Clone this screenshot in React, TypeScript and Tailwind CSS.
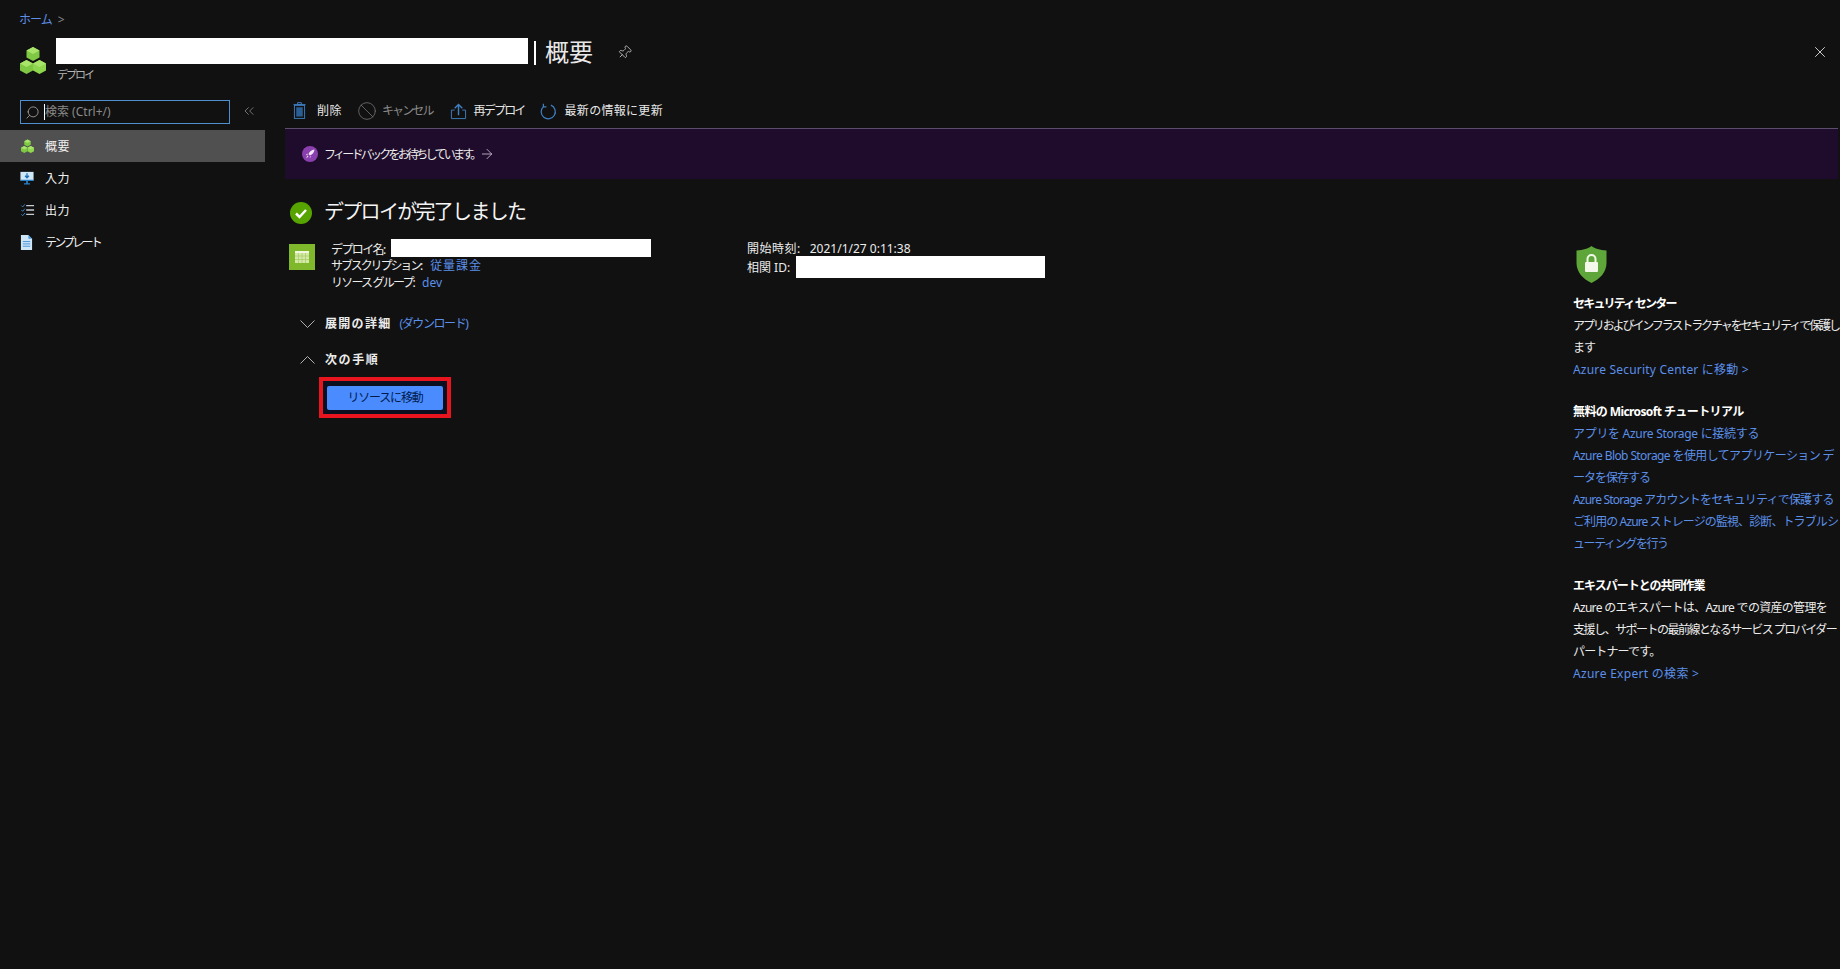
import { Pin, X, Search, ChevronsLeft, Ban, ArrowRight } from "lucide-react";

function CubeIcon({ className }: { className: string }) {
  return (
    <svg viewBox="0 0 28 30" className={className}>
      <path d="M14 1l6.500 3.500v7L14 15l-6.500-3.500v-7z" fill="#7fc843" />
      <path d="M7.500 14L14 17.500v7L7.500 28 1 24.500v-7z" fill="#7fc843" />
      <path d="M20.500 14L27 17.500v7L20.500 28 14 24.500v-7z" fill="#8fd64f" />
      <path d="M14 1l6.500 3.500L14 8 7.500 4.500zM7.500 14l6.500 3.500-6.500 3.500L1 17.500zM20.500 14l6.500 3.500-6.500 3.500-6.500-3.500z" fill="#a8e46a" />
    </svg>
  );
}

function InputIcon() {
  return (
    <svg viewBox="0 0 16 16" className="w-[14px] h-[14px]">
      <rect x="0.500" y="1" width="15" height="10" fill="#cfe8f7" />
      <path d="M8 2.500v5M5.800 5.500L8 7.800l2.200-2.300" stroke="#1f6fb5" strokeWidth="1.500" fill="none" />
      <path d="M0.500 10h15v1.500h-15zM7 11.500h2v2.500H7zM4.500 14h7v1.500h-7z" fill="#2a7fc4" />
    </svg>
  );
}

function OutputIcon() {
  return (
    <svg viewBox="0 0 16 16" className="w-[15px] h-[14px]" fill="none">
      <path d="M1 3l1.500 1.500L5 1.500M1 8l1.500 1.500L5 6.500M1 13l1.500 1.500L5 11.500" stroke="#3f8fd6" strokeWidth="1" />
      <path d="M6.500 3h9M6.500 8h9M6.500 13h9" stroke="#c9ccd0" strokeWidth="1.500" />
    </svg>
  );
}

function TemplateIcon() {
  return (
    <svg viewBox="0 0 14 16" className="w-[13px] h-[15px]">
      <path d="M1 0h8l4 4v12H1z" fill="#cfe6f7" />
      <path d="M9 0l4 4H9z" fill="#4a9bdc" />
      <path d="M3 7h8M3 9.500h8M3 12h8" stroke="#3f8fd6" strokeWidth="1" />
    </svg>
  );
}

function TrashIcon() {
  return (
    <svg viewBox="0 0 14 18" className="w-[13px] h-[17px] mb-[2px]" fill="none">
      <path d="M5 0.500h4v2H5z" stroke="#3f7fc0" />
      <path d="M0.500 2.500h13" stroke="#3f7fc0" />
      <rect x="1.500" y="3.500" width="11" height="14" stroke="#3f7fc0" />
      <rect x="3.500" y="5.500" width="7" height="10" fill="#2a5f95" />
    </svg>
  );
}

function UploadIcon() {
  return (
    <svg viewBox="0 0 18 18" className="w-[17px] h-[17px]" fill="none" stroke="#3f7fc0">
      <path d="M5 7.500H1.500v9h15v-9H13" />
      <path d="M9 13V1.500M5 5.500l4-4 4 4" strokeWidth="1.500" />
    </svg>
  );
}

function RefreshIcon() {
  return (
    <svg viewBox="0 0 18 18" className="w-[17px] h-[17px]" fill="none" stroke="#3f7fc0" strokeWidth="1.300">
      <path d="M11.500 2.300A7.500 7.500 0 1 1 3.600 3.800" />
      <path d="M3.600 0.800v3.200h3.200" />
    </svg>
  );
}

function RocketIcon() {
  return (
    <svg viewBox="0 0 16 16" className="w-4 h-4">
      <circle cx="8" cy="8" r="8" fill="#8a3fae" />
      <path d="M12.500 3.500c-3 .3-5 2-6 4.500l1.500 1.500c2.500-1 4.200-3 4.500-6zM6 7.500L4 8.500l1 1zM8.500 10l-1 2 1.500-1zM5.500 9.500l1 1-2.500 2z" fill="#f2e6f7" />
    </svg>
  );
}

function CheckCircle() {
  return (
    <svg viewBox="0 0 22 22" className="w-[22px] h-[22px] mt-[2px]">
      <circle cx="11" cy="11" r="11" fill="#57a300" />
      <path d="M6 11.500l3.500 3.500L16 8" stroke="#fff" strokeWidth="2.500" fill="none" />
    </svg>
  );
}

function Chevron({ up }: { up: boolean }) {
  return (
    <svg viewBox="0 0 15 8" className="w-[15px] h-[8px]" fill="none" stroke="#b0b0b0">
      <path d={up ? "M0.500 7.500l7-7 7 7" : "M0.500 0.500l7 7 7-7"} />
    </svg>
  );
}

function DeployTile() {
  return (
    <div className="w-[26px] h-[26px] bg-[#7fb82a] flex items-center justify-center">
      <svg viewBox="0 0 14 12" className="w-[14px] h-[12px]">
        <rect width="14" height="12" fill="#d4e8a8" />
        <rect y="0" width="14" height="2" fill="#f2f8e0" />
        <path d="M3.500 2v10M7 2v10M10.500 2v10M0 5h14M0 8.500h14" stroke="#a6cc62" strokeWidth="0.700" />
      </svg>
    </div>
  );
}

function ShieldIcon() {
  return (
    <svg viewBox="0 0 31 37" className="w-[31px] h-[37px]">
      <path d="M15.500 0c3.500 2.500 8 4 15 4.500V17c0 9-6.500 16-15 20C7 33 .5 26 .5 17V4.500C7.500 4 12 2.500 15.500 0z" fill="#5ea63a" />
      <rect x="9" y="16" width="13" height="10" rx="1" fill="#f2f8ea" />
      <path d="M11.500 16v-3a4 4 0 018 0v3" stroke="#f2f8ea" strokeWidth="2" fill="none" />
    </svg>
  );
}

const navItems = [
  { icon: <CubeIcon className="w-[15px] h-[15px]" />, label: "概要", text: "mt-[2px] tracking-[0.500px] text-[#f0f0f0]", active: true },
  { icon: <InputIcon />, label: "入力", text: "mt-[2px] tracking-[0.500px] text-[#f0f0f0]", active: false },
  { icon: <OutputIcon />, label: "出力", text: "mt-[2px] tracking-[0.500px] text-[#f0f0f0]", active: false },
  { icon: <TemplateIcon />, label: "テンプレート", text: "mt-[2px] tracking-[-2.800px] text-[#f0f0f0]", active: false },
];

export default function App() {
  return (
    <div className="h-[969px] overflow-hidden bg-[#111111] text-white text-[12px] font-['Noto_Sans','Noto_Sans_CJK_JP',sans-serif]">
      {/* breadcrumb + title */}
      <div className="h-[100px] pl-[19px] pr-[11px]">
        <div className="h-[38px] pt-[10px] flex items-start gap-[6px] leading-[20px] text-[#5b8fe8]">
          <span className="tracking-[-1px]">ホーム</span>
          <span className="text-[#8a8a8a]">&gt;</span>
        </div>
        <div className="flex items-start">
          <CubeIcon className="w-[28px] h-[30px] mt-[8px]" />
          <div className="ml-[9px]">
            <div className="h-[26px] w-[472px] bg-white" />
            <div className="ml-[1px] mt-[2px] text-[11px] leading-[18px] text-[#b5b5b5] tracking-[-2px]">デプロイ</div>
          </div>
          <div className="ml-[6px] mt-[3px] w-[2px] h-[24px] bg-white" />
          <div className="ml-[9px] text-[24px] leading-[28px] text-[#e8e8e8]">概要</div>
          <Pin className="ml-[24px] mt-[7px] w-[15px] h-[15px] text-[#c8c8c8] rotate-45" strokeWidth={1.300} />
          <X className="ml-auto mt-[5px] w-[18px] h-[18px] text-[#e0e0e0]" strokeWidth={1.200} />
        </div>
      </div>

      <div className="flex">
        {/* sidebar */}
        <aside className="w-[265px] shrink-0">
          <div className="h-[30px] pl-[20px] flex items-start">
            <div className="w-[210px] h-[24px] border border-[#4f8fd0] flex items-center pl-[4px]">
              <Search className="w-[15px] h-[15px] text-[#a0a0a0] -scale-x-100" strokeWidth={1.400} />
              <span className="ml-[4px] w-px h-[16px] bg-white" />
              <span className="text-[#8a8a8a]">検索 (Ctrl+/)</span>
            </div>
            <ChevronsLeft className="ml-[11px] mt-[3px] w-[16px] h-[16px] text-[#8a8a8a]" strokeWidth={1.200} />
          </div>
          {navItems.map((item) => (
            <div
              key={item.label}
              className={
                item.active
                  ? "h-[32px] pl-[20px] flex items-center bg-[#505050]"
                  : "h-[32px] pl-[20px] flex items-center"
              }
            >
              <span className="w-[25px] flex items-center">{item.icon}</span>
              <span className={item.text}>{item.label}</span>
            </div>
          ))}
        </aside>

        {/* main blade */}
        <main className="flex-1 min-w-0 pl-[20px]">
          <div className="h-[29px] mr-[2px] border-b border-[#5c4f6b] flex items-start pl-[8px]">
            <div className="flex items-center h-[22px]">
              <TrashIcon />
              <span className="ml-[11px] text-[#e8e8e8] tracking-[0.500px]">削除</span>
            </div>
            <div className="ml-[15px] flex items-center h-[22px]">
              <Ban className="w-[20px] h-[20px] text-[#7a7a7a]" strokeWidth={0.900} />
              <span className="ml-[5px] text-[#8a8a8a] tracking-[-1.900px]">キャンセル</span>
            </div>
            <div className="ml-[17px] flex items-center h-[22px]">
              <UploadIcon />
              <span className="ml-[7px] text-[#e8e8e8] tracking-[-1.800px]">再デプロイ</span>
            </div>
            <div className="ml-[15px] flex items-center h-[22px]">
              <RefreshIcon />
              <span className="ml-[8px] text-[#e8e8e8] tracking-[0.300px]">最新の情報に更新</span>
            </div>
          </div>

          <div className="h-[50px] mr-[2px] bg-[#1f0b2b] flex items-center pl-[17px]">
            <RocketIcon />
            <span className="ml-[6px] mt-[2px] text-[#ececec] tracking-[-2.750px]">フィードバックをお待ちしています。</span>
            <ArrowRight className="ml-0 w-[16px] h-[16px] text-[#d8c8e0]" strokeWidth={1.200} />
          </div>

          <div className="flex">
            <div className="flex-1 min-w-0">
              <div className="mt-[13px] ml-[5px] flex items-center h-[40px]">
                <CheckCircle />
                <span className="ml-[12px] text-[20px] tracking-[-1.700px] text-[#f5f5f5]">デプロイが完了しました</span>
              </div>

              <div className="mt-[7px] ml-[4px] flex items-start">
                <div className="mt-[5px]">
                  <DeployTile />
                </div>
                <div className="ml-[16px] w-[416px] leading-[17px] text-[#ececec]">
                  <div className="flex items-center h-[18px]">
                    <span className="mt-[2px] tracking-[-1.600px]">デプロイ名:</span>
                    <span className="ml-[6px] w-[260px] h-[18px] bg-white" />
                  </div>
                  <div className="flex items-center h-[17px]">
                    <span className="tracking-[-2.100px]">サブスクリプション:</span>
                    <span className="ml-[9px] text-[#5b8fe8] tracking-[0.900px]">従量課金</span>
                  </div>
                  <div className="flex items-center h-[17px]">
                    <span className="tracking-[-1.800px]">リソース グループ:</span>
                    <span className="ml-[8px] text-[#5b8fe8]">dev</span>
                  </div>
                </div>
                <div className="leading-[17px] text-[#ececec]">
                  <div className="flex items-center h-[17px]">
                    <span className="mt-[1px] tracking-[0.500px]">開始時刻:</span>
                    <span className="mt-[1px] ml-[9px]">2021/1/27 0:11:38</span>
                  </div>
                  <div className="flex items-center h-[22px]">
                    <span>相関 ID:</span>
                    <span className="ml-[6px] w-[249px] h-[22px] bg-white" />
                  </div>
                </div>
              </div>

              <div className="mt-[22px] ml-[15px] flex items-center h-[22px]">
                <Chevron up={false} />
                <span className="ml-[10px] font-bold text-[#ececec] tracking-[1.300px]">展開の詳細</span>
                <span className="ml-[8px] text-[#5b8fe8] tracking-[-1.400px]">(ダウンロード)</span>
              </div>
              <div className="mt-[14px] ml-[15px] flex items-center h-[22px]">
                <Chevron up={true} />
                <span className="ml-[10px] font-bold text-[#ececec] tracking-[1.600px]">次の手順</span>
              </div>
              <div className="mt-[6px] ml-[34px] w-[132px] h-[41px] border-[4px] border-[#e8141e] bg-[#0a1020] flex items-center justify-center">
                <button className="w-[116px] h-[24px] rounded-[2px] bg-[#4a8cff] text-[#001a4d] tracking-[-1.200px]">
                  リソースに移動
                </button>
              </div>
            </div>

            {/* right rail */}
            <div className="w-[267px] shrink-0 pt-[67px] overflow-hidden whitespace-nowrap leading-[22px] text-[#ececec]">
              <div className="ml-[3px]">
                <ShieldIcon />
              </div>
              <div className="mt-[10px] font-bold tracking-[-1.800px] text-white">セキュリティ センター</div>
              <div className="tracking-[-2.100px]">アプリおよびインフラストラクチャをセキュリティで保護し</div>
              <div className="tracking-[-1.100px]">ます</div>
              <div className="text-[#5b8fe8] tracking-[0.200px]">Azure Security Center に移動 &gt;</div>

              <div className="mt-[20px] font-bold text-white tracking-[-0.600px]">無料の Microsoft チュートリアル</div>
              <div className="text-[#5b8fe8] tracking-[-0.300px]">アプリを Azure Storage に接続する</div>
              <div className="text-[#5b8fe8] tracking-[-0.600px]">Azure Blob Storage を使用してアプリケーション デ</div>
              <div className="text-[#5b8fe8] tracking-[-1px]">ータを保存する</div>
              <div className="text-[#5b8fe8] tracking-[-0.800px]">Azure Storage アカウントをセキュリティで保護する</div>
              <div className="text-[#5b8fe8] tracking-[-0.900px]">ご利用の Azure ストレージの監視、診断、トラブルシ</div>
              <div className="text-[#5b8fe8] tracking-[-1.400px]">ューティングを行う</div>

              <div className="mt-[20px] font-bold text-white tracking-[-1px]">エキスパートとの共同作業</div>
              <div className="tracking-[-0.700px]">Azure のエキスパートは、Azure での資産の管理を</div>
              <div className="tracking-[-1.500px]">支援し、サポートの最前線となるサービス プロバイダー</div>
              <div className="tracking-[-0.850px]">パートナーです。</div>
              <div className="text-[#5b8fe8] tracking-[0.300px]">Azure Expert の検索 &gt;</div>
            </div>
          </div>
        </main>
      </div>
    </div>
  );
}
